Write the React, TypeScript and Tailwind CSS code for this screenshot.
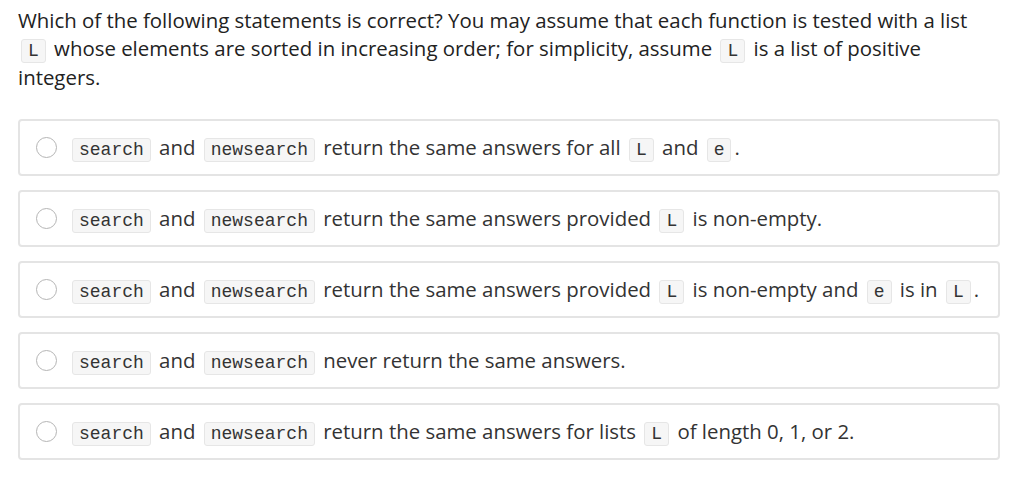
import React from 'react';

function Code({ children }: { children: React.ReactNode }) {
  return (
    <code className="mx-[3px] inline-block rounded-[3px] border border-[#e6e6e6] bg-[#f6f6f6] px-[6px] py-[1px] [font-family:'Liberation_Mono','Courier_New',monospace] text-[18px] leading-[20px] text-[#333]">
      {children}
    </code>
  );
}

const options: React.ReactNode[] = [
  <>
    <Code>search</Code> and <Code>newsearch</Code> return the same answers for all <Code>L</Code> and <Code>e</Code>.
  </>,
  <>
    <Code>search</Code> and <Code>newsearch</Code> return the same answers provided <Code>L</Code> is non-empty.
  </>,
  <>
    <Code>search</Code> and <Code>newsearch</Code> return the same answers provided <Code>L</Code> is non-empty and{' '}
    <Code>e</Code> is in <Code>L</Code>.
  </>,
  <>
    <Code>search</Code> and <Code>newsearch</Code> never return the same answers.
  </>,
  <>
    <Code>search</Code> and <Code>newsearch</Code> return the same answers for lists <Code>L</Code> of length 0, 1, or 2.
  </>,
];

export default function App() {
  return (
    <div className="min-h-screen bg-white font-['Open_Sans',sans-serif] text-[#222]">
      <div className="ml-[18px] w-[982px] pt-[6px]">
        {/* Question */}
        <p className="text-[20.4px] leading-[28px]">
          Which of the following statements is correct? You may assume that each function is tested with a list{' '}
          <Code>L</Code> whose elements are sorted in increasing order; for simplicity, assume <Code>L</Code> is a list
          of positive integers.
        </p>

        {/* Options */}
        <div className="mt-[28px] flex flex-col gap-[14px]">
          {options.map((opt, i) => (
            <label
              key={i}
              className="flex h-[57px] items-center gap-[12px] rounded-[4px] border-2 border-[#e4e4e4] pl-[16px] text-[20.4px] text-[#333]"
            >
              <span className="h-[21px] w-[21px] shrink-0 rounded-full border border-[#b5b5b5] bg-white" />
              <span>{opt}</span>
            </label>
          ))}
        </div>
      </div>
    </div>
  );
}
